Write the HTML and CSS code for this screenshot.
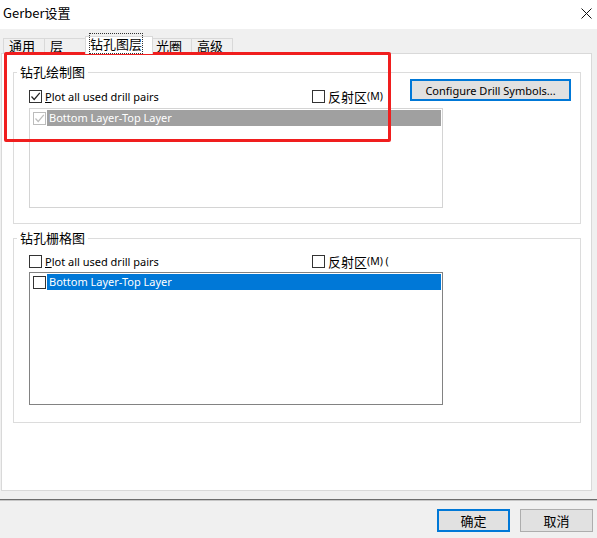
FILE: index.html
```html
<!DOCTYPE html>
<html lang="zh-CN">
<head>
  <meta charset="UTF-8">
  <title>Gerber设置</title>
  <link rel="stylesheet" href="styles.css">
</head>
<body>
  <div class="window">
    <div class="titlebar">
      <span class="title">Gerber设置</span>
      <svg class="close" width="11" height="11" viewBox="0 0 11 11">
        <path d="M0.5 0.5 L10.5 10.5 M10.5 0.5 L0.5 10.5" stroke="#111" stroke-width="1" fill="none"/>
      </svg>
    </div>

    <div class="client">
      <div class="tabs">
        <div class="tab">通用</div>
        <div class="tab">层</div>
        <div class="tab active"><span class="focus">钻孔图层</span></div>
        <div class="tab">光圈</div>
        <div class="tab">高级</div>
      </div>

      <div class="panel">
        <!-- Drill drawing group -->
        <fieldset class="group group-draw">
          <legend>钻孔绘制图</legend>
          <div class="row">
            <label class="check-label plot">
              <span class="box checked">
                <svg width="11" height="11" viewBox="0 0 11 11"><path d="M1.5 5.5 L4.2 8.5 L9.8 1.8" stroke="#222" stroke-width="1.2" fill="none"/></svg>
              </span>
              <span><u>P</u>lot all used drill pairs</span>
            </label>
            <label class="check-label mirror">
              <span class="box"></span>
              <span class="zh">反射区</span><span class="hotkey">(M)</span>
            </label>
            <button class="btn btn-focus config-btn">Configure Drill Symbols...</button>
          </div>
          <div class="listbox disabled">
            <div class="list-item">
              <span class="box dim checked">
                <svg width="11" height="11" viewBox="0 0 11 11"><path d="M1.5 5.5 L4.2 8.5 L9.8 1.8" stroke="#bdbdbd" stroke-width="1.2" fill="none"/></svg>
              </span>
              <span class="item-text gray">Bottom Layer-Top Layer</span>
            </div>
          </div>
        </fieldset>

        <!-- Drill grid group -->
        <fieldset class="group group-grid">
          <legend>钻孔栅格图</legend>
          <div class="row">
            <label class="check-label plot">
              <span class="box"></span>
              <span><u>P</u>lot all used drill pairs</span>
            </label>
            <label class="check-label mirror">
              <span class="box"></span>
              <span class="zh">反射区</span><span class="hotkey">(M) (</span>
            </label>
          </div>
          <div class="listbox tall">
            <div class="list-item">
              <span class="box white"></span>
              <span class="item-text blue">Bottom Layer-Top Layer</span>
            </div>
          </div>
        </fieldset>
      </div>

      <div class="footer">
        <button class="btn btn-focus dlg-btn">确定</button>
        <button class="btn dlg-btn">取消</button>
      </div>
    </div>

    <div class="annotation"></div>
  </div>
</body>
</html>
```

FILE: styles.css
```css
:root {
  --win-gray: #f0f0f0;
  --line: #d9d9d9;
  --accent: #0078d7;
}
body {
  margin: 0;
  font-family: "Noto Sans", "Noto Sans CJK SC", sans-serif;
  font-size: 11px;
  color: #000;
  background: #fff;
}
.window {
  position: relative;
  width: 597px;
  height: 538px;
  overflow: hidden;
}
.titlebar {
  height: 29px;
  display: flex;
  justify-content: space-between;
  align-items: flex-start;
  background: #fff;
}
.title {
  font-family: "Noto Sans CJK SC", sans-serif;
  font-size: 13px;
  line-height: 17px;
  padding: 4px 0 0 3px;
}
.close {
  margin: 8px 5px 0 0;
}
.client {
  height: 509px;
  background: var(--win-gray);
}
.tabs {
  display: flex;
  align-items: flex-end;
  height: 24px;
  padding-left: 3px;
  box-sizing: border-box;
}
.tab {
  box-sizing: border-box;
  min-width: 42px;
  height: 15px;
  padding: 0 8px 0 5px;
  margin-right: -1px;
  border: 1px solid var(--line);
  border-bottom: none;
  font-family: "Noto Sans CJK SC", sans-serif;
  font-size: 13px;
  line-height: 14px;
}
.tab.active {
  position: relative;
  z-index: 1;
  height: 18px;
  margin: 0 -3px -1px 0;
  padding: 0 10px 0 4px;
  background: #fff;
}
.focus {
  outline: 1px dotted #333;
  outline-offset: 0;
}
.panel {
  box-sizing: border-box;
  width: 591px;
  height: 438px;
  margin-left: 1px;
  padding: 0 11px;
  border: 1px solid var(--line);
  background: #fff;
}
.group {
  margin: 10px 0 0 0;
  padding: 0;
  width: 568px;
  box-sizing: border-box;
  border: 1px solid #dcdcdc;
}
.group legend {
  margin-left: 3px;
  padding: 0 3px;
  font-family: "Noto Sans CJK SC", sans-serif;
  font-size: 13px;
  line-height: 16px;
}
.group-draw {
  padding-bottom: 15px;
}
.group-grid {
  margin-top: 6px;
  padding-bottom: 17px;
}
.row {
  display: flex;
  align-items: flex-start;
  padding-left: 15px;
}
.group-draw .row {
  margin-top: -1px;
}
.check-label {
  display: flex;
  align-items: center;
  gap: 3px;
  height: 14px;
  margin-top: 10px;
  white-space: nowrap;
}
.group-grid .check-label {
  margin-top: 8px;
}
.plot {
  width: 283px;
}
.mirror {
  width: 98px;
}
.zh {
  font-family: "Noto Sans CJK SC", sans-serif;
  font-size: 13px;
}
.hotkey {
  font-size: 10.5px;
  margin-left: -3px;
}
.box {
  box-sizing: border-box;
  flex: none;
  width: 13px;
  height: 13px;
  border: 1px solid #333;
  background: #fff;
  display: flex;
  align-items: center;
  justify-content: center;
}
.box.dim {
  border-color: #bcbcbc;
}
.btn {
  box-sizing: border-box;
  background: #e1e1e1;
  border: 1px solid #adadad;
  font-family: "Noto Sans", "Noto Sans CJK SC", sans-serif;
  font-size: 11px;
  color: #000;
  padding: 0;
}
.btn-focus {
  border: 2px solid var(--accent);
}
.config-btn {
  width: 161px;
  height: 22px;
}
.listbox {
  box-sizing: border-box;
  width: 414px;
  height: 100px;
  margin: 5px 0 0 15px;
  padding: 1px;
  border: 1px solid #828282;
  background: #fff;
}
.listbox.disabled {
  border-color: #d4d4d4;
}
.listbox.tall {
  height: 133px;
  margin-top: 4px;
}
.list-item {
  display: flex;
  align-items: center;
  height: 16px;
  gap: 1px;
  padding-left: 2px;
}
.item-text {
  flex: 1;
  height: 16px;
  line-height: 16px;
  padding-left: 2px;
  color: #fff;
}
.item-text.gray {
  background: #a0a0a0;
}
.item-text.blue {
  background: var(--accent);
}
.footer {
  display: flex;
  justify-content: flex-end;
  gap: 10px;
  margin-top: 8px;
  padding: 9px 4px 0 0;
  border-top: 1px solid #6d6d6d;
  box-shadow: inset 0 1px 0 #c6c6c6;
}
.dlg-btn {
  width: 73px;
  height: 23px;
  font-family: "Noto Sans CJK SC", sans-serif;
  font-size: 13px;
}
/* red callout drawn over the first group */
.annotation {
  position: absolute;
  left: 4px;
  top: 52px;
  width: 387px;
  height: 90px;
  box-sizing: border-box;
  border: 3px solid #f01e1e;
  border-radius: 2px;
}
```
